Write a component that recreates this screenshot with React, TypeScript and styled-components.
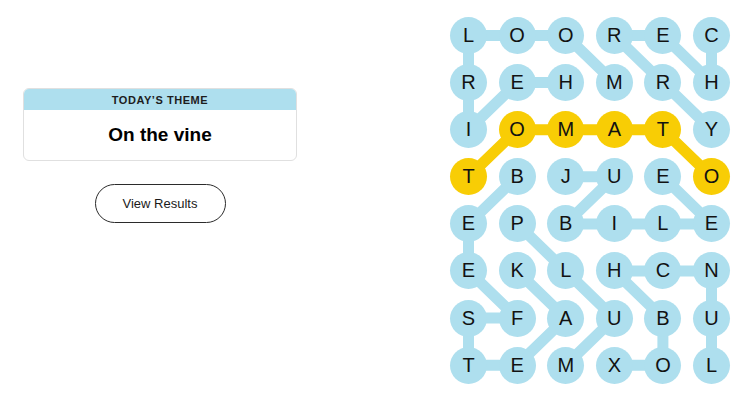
import React from "react";
import styled, { createGlobalStyle } from "styled-components";

const GlobalStyle = createGlobalStyle`
  html, body {
    margin: 0;
    padding: 0;
    background: #ffffff;
    font-family: "Liberation Sans", Arial, sans-serif;
    color: #121212;
  }
`;

// --- board geometry ---
const CELL = 37;
const COL_STEP = 48.6;
const ROW_STEP = 47.1;

const LETTERS = [
  "LOOREC",
  "REHMRH",
  "IOMATY",
  "TBJUEO",
  "EPBILE",
  "EKLHCN",
  "SFAUBU",
  "TEMXOL",
];

type Cell = [number, number];

// found words, as paths of [row, col]
const WORDS: { path: Cell[]; spangram?: boolean }[] = [
  // HEIRLOOM
  { path: [[1, 2], [1, 1], [2, 0], [1, 0], [0, 0], [0, 1], [0, 2], [1, 3]] },
  // CHERRY
  { path: [[0, 5], [1, 5], [0, 4], [0, 3], [1, 4], [2, 5]] },
  // TOMATO
  { path: [[3, 0], [2, 1], [2, 2], [2, 3], [2, 4], [3, 5]], spangram: true },
  // BEEFSTEAK
  { path: [[3, 1], [4, 0], [5, 0], [6, 1], [6, 0], [7, 0], [7, 1], [6, 2], [5, 1]] },
  // JUBILEE
  { path: [[3, 2], [3, 3], [4, 2], [4, 3], [4, 4], [4, 5], [3, 4]] },
  // PLUM
  { path: [[4, 1], [5, 2], [6, 3], [7, 2]] },
  // LUNCHBOX
  { path: [[7, 5], [6, 5], [5, 5], [5, 4], [5, 3], [6, 4], [7, 4], [7, 3]] },
];

const spanCells = new Set(
  WORDS.filter((w) => w.spangram).flatMap((w) => w.path.map(([r, c]) => `${r}-${c}`))
);

const BLUE = "#aedfee";
const YELLOW = "#f8cd05";

// --- styled components ---

const Page = styled.div`
  display: flex;
  align-items: flex-start;
  width: 750px;
  height: 402px;
  padding: 17px 20px 0 23px;
  box-sizing: border-box;
`;

const LeftPanel = styled.div`
  width: 274px;
  margin-top: 71px;
  display: flex;
  flex-direction: column;
  align-items: center;
`;

const ThemeCard = styled.div`
  width: 100%;
  border: 1px solid #e0e0e0;
  border-radius: 6px;
  overflow: hidden;
  box-sizing: border-box;
`;

const ThemeHeader = styled.div`
  height: 21px;
  background: ${BLUE};
  display: flex;
  align-items: center;
  justify-content: center;
  font-size: 11px;
  font-weight: 700;
  letter-spacing: 0.55px;
  text-transform: uppercase;
  color: #1d1d1d;
`;

const ThemeBody = styled.div`
  height: 50px;
  display: flex;
  align-items: center;
  justify-content: center;
  font-size: 19px;
  font-weight: 700;
  color: #000;
`;

const ResultsButton = styled.button`
  margin-top: 23px;
  width: 131px;
  height: 39px;
  border: 1px solid #2b2b2b;
  border-radius: 20px;
  background: #fff;
  font-family: "Liberation Sans", Arial, sans-serif;
  font-size: 13px;
  color: #1a1a1a;
  cursor: pointer;
`;

const Board = styled.div`
  position: relative;
  margin-left: auto;
  display: grid;
  grid-template-columns: repeat(6, ${CELL}px);
  grid-auto-rows: ${CELL}px;
  column-gap: ${COL_STEP - CELL}px;
  row-gap: ${ROW_STEP - CELL}px;
`;

const Connectors = styled.svg`
  position: absolute;
  inset: 0;
  width: 100%;
  height: 100%;
  z-index: 0;
  overflow: visible;
`;

const LetterCircle = styled.div<{ $span?: boolean }>`
  position: relative;
  z-index: 1;
  width: ${CELL}px;
  height: ${CELL}px;
  border-radius: 50%;
  background: ${(p) => (p.$span ? YELLOW : BLUE)};
  display: flex;
  align-items: center;
  justify-content: center;
  font-size: 20px;
  color: #121212;
  user-select: none;
`;

const center = ([r, c]: Cell) => ({
  x: c * COL_STEP + CELL / 2,
  y: r * ROW_STEP + CELL / 2,
});

export default function App() {
  return (
    <>
      <GlobalStyle />
      <Page>
        <LeftPanel>
          <ThemeCard>
            <ThemeHeader>Today’s Theme</ThemeHeader>
            <ThemeBody>On the vine</ThemeBody>
          </ThemeCard>
          <ResultsButton>View Results</ResultsButton>
        </LeftPanel>

        <Board>
          <Connectors>
            {WORDS.map((w, i) => (
              <polyline
                key={i}
                points={w.path
                  .map((cell) => {
                    const p = center(cell);
                    return `${p.x},${p.y}`;
                  })
                  .join(" ")}
                fill="none"
                stroke={w.spangram ? YELLOW : BLUE}
                strokeWidth={11}
                strokeLinejoin="round"
              />
            ))}
          </Connectors>
          {LETTERS.map((row, r) =>
            row.split("").map((ch, c) => (
              <LetterCircle key={`${r}-${c}`} $span={spanCells.has(`${r}-${c}`)}>
                {ch}
              </LetterCircle>
            ))
          )}
        </Board>
      </Page>
    </>
  );
}
